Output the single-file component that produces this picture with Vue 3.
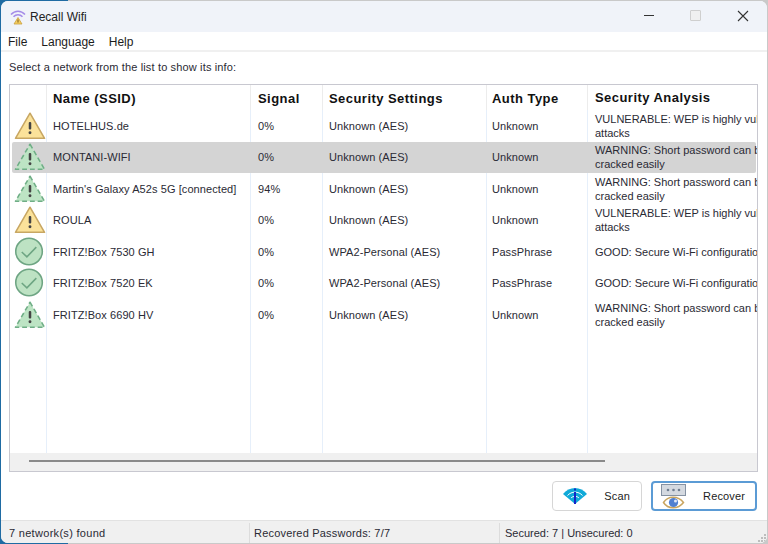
<script setup>
const columns = [
  { key: 'name', label: 'Name (SSID)' },
  { key: 'signal', label: 'Signal' },
  { key: 'security', label: 'Security Settings' },
  { key: 'auth', label: 'Auth Type' },
  { key: 'analysis', label: 'Security Analysis' },
]

const vulnerable = ['VULNERABLE: WEP is highly vulnerable to', 'attacks']
const weak = ['WARNING: Short password can be', 'cracked easily']
const good = ['GOOD: Secure Wi-Fi configuration']

const networks = [
  { icon: 'warn', name: 'HOTELHUS.de', signal: '0%', security: 'Unknown (AES)', auth: 'Unknown', analysis: vulnerable },
  { icon: 'weak', name: 'MONTANI-WIFI', signal: '0%', security: 'Unknown (AES)', auth: 'Unknown', analysis: weak, selected: true },
  { icon: 'weak', name: "Martin's Galaxy A52s 5G [connected]", signal: '94%', security: 'Unknown (AES)', auth: 'Unknown', analysis: weak },
  { icon: 'warn', name: 'ROULA', signal: '0%', security: 'Unknown (AES)', auth: 'Unknown', analysis: vulnerable },
  { icon: 'good', name: 'FRITZ!Box 7530 GH', signal: '0%', security: 'WPA2-Personal (AES)', auth: 'PassPhrase', analysis: good },
  { icon: 'good', name: 'FRITZ!Box 7520 EK', signal: '0%', security: 'WPA2-Personal (AES)', auth: 'PassPhrase', analysis: good },
  { icon: 'weak', name: 'FRITZ!Box 6690 HV', signal: '0%', security: 'Unknown (AES)', auth: 'Unknown', analysis: weak },
]
</script>

<template>
  <div class="desktop">
    <div class="window">
      <header class="titlebar">
        <svg class="app-icon" width="18" height="18" viewBox="0 0 18 18">
          <path d="M2 6.5C6 2 12 2 16 6.5" fill="none" stroke="#a48be8" stroke-width="1.5" />
          <path d="M4.5 8.8C7 6 11 6 13.5 8.8" fill="none" stroke="#a48be8" stroke-width="1.5" />
          <path d="M9 9.5L13 16H5z" fill="#f5cd5e" stroke="#c9a040" stroke-width="0.8" />
          <rect x="8.5" y="11.5" width="1" height="3" fill="#7a5a20" />
        </svg>
        <span class="title">Recall Wifi</span>
        <div class="controls">
          <span class="ctl"><i class="min" /></span>
          <span class="ctl"><i class="max" /></span>
          <span class="ctl">
            <svg width="12" height="12" viewBox="0 0 12 12">
              <path d="M1 1L11 11M11 1L1 11" stroke="#333" stroke-width="1.1" />
            </svg>
          </span>
        </div>
      </header>

      <nav class="menubar">
        <span>File</span>
        <span>Language</span>
        <span>Help</span>
      </nav>

      <main class="content">
        <p class="hint">Select a network from the list to show its info:</p>

        <div class="list">
          <div class="head row">
            <div class="cell icon-cell" />
            <div v-for="col in columns" :key="col.key" class="cell" :class="col.key">{{ col.label }}</div>
          </div>

          <div class="rows">
            <div v-for="net in networks" :key="net.name" class="row" :class="{ selected: net.selected }">
              <div class="cell icon-cell">
                <svg v-if="net.icon === 'warn'" width="33" height="30" viewBox="0 0 33 30">
                  <path d="M16.5 1.8L31.5 27.7H1.5z" fill="#fbe29a" stroke="#c8a763" stroke-width="1.6" stroke-linejoin="round" />
                  <rect x="15.2" y="11" width="2.6" height="7.5" rx="1" fill="#444" />
                  <circle cx="16.5" cy="22" r="1.5" fill="#444" />
                </svg>
                <svg v-else-if="net.icon === 'weak'" width="33" height="30" viewBox="0 0 33 30">
                  <path d="M16.5 1.8L31.5 27.7H1.5z" fill="#bde4c4" stroke="#6fae86" stroke-width="1.6" stroke-dasharray="5 3" stroke-linejoin="round" />
                  <rect x="15.2" y="11" width="2.6" height="7.5" rx="1" fill="#444" />
                  <circle cx="16.5" cy="22" r="1.5" fill="#444" />
                </svg>
                <svg v-else width="33" height="30" viewBox="0 0 33 30">
                  <circle cx="15.5" cy="14.5" r="13.7" fill="#bde2c3" stroke="#6ea583" stroke-width="1.6" />
                  <path d="M8 15L13.3 20L23 10" fill="none" stroke="#6ea583" stroke-width="1.6" />
                </svg>
              </div>
              <div class="cell name">{{ net.name }}</div>
              <div class="cell signal">{{ net.signal }}</div>
              <div class="cell security">{{ net.security }}</div>
              <div class="cell auth">{{ net.auth }}</div>
              <div class="cell analysis">
                <span v-for="line in net.analysis" :key="line">{{ line }}</span>
              </div>
            </div>
            <div class="row filler">
              <div class="cell icon-cell" />
              <div class="cell name" />
              <div class="cell signal" />
              <div class="cell security" />
              <div class="cell auth" />
              <div class="cell analysis" />
            </div>
          </div>

          <div class="scrollbar"><div class="thumb" /></div>
        </div>

        <div class="actions">
          <button class="btn scan">
            <svg width="26" height="18" viewBox="0 0 26 18">
              <path d="M1 7C7 -1 19 -1 25 7L13 17z" fill="#10a9d8" />
              <path d="M5.5 8.5C9.5 4 16.5 4 20.5 8.5" fill="none" stroke="#fff" stroke-width="1" />
              <path d="M9 11C11 8.8 15 8.8 17 11" fill="none" stroke="#fff" stroke-width="1" />
              <rect x="12" y="5" width="2" height="12" fill="#1626c8" />
              <rect x="12" y="1.5" width="2" height="2" fill="#1626c8" />
            </svg>
            <span>Scan</span>
          </button>
          <button class="btn recover">
            <svg width="26" height="28" viewBox="0 0 26 28">
              <rect x="0.5" y="2.5" width="24" height="11" fill="#d4d9e0" stroke="#8592a3" />
              <circle cx="7" cy="8" r="1.3" fill="#6f7d90" />
              <circle cx="12.5" cy="8" r="1.3" fill="#6f7d90" />
              <circle cx="18" cy="8" r="1.3" fill="#6f7d90" />
              <path d="M2.5 20.5C7 13.5 17 13.5 22.5 20.5C17 27.5 7 27.5 2.5 20.5z" fill="#fff" stroke="#c9a560" stroke-width="1.5" />
              <circle cx="12.5" cy="20.5" r="4.6" fill="#4f7fd0" />
              <circle cx="14.5" cy="19" r="1.5" fill="#dfe8f8" />
            </svg>
            <span>Recover</span>
          </button>
        </div>
      </main>

      <footer class="statusbar">
        <div class="panel first">7 network(s) found</div>
        <div class="panel second">Recovered Passwords: 7/7</div>
        <div class="panel third">Secured: 7 | Unsecured: 0</div>
        <svg class="grip" width="10" height="10" viewBox="0 0 10 10">
          <g fill="#bdbdbd">
            <rect x="7" y="1" width="2" height="2" />
            <rect x="4" y="4" width="2" height="2" />
            <rect x="7" y="4" width="2" height="2" />
            <rect x="1" y="7" width="2" height="2" />
            <rect x="4" y="7" width="2" height="2" />
            <rect x="7" y="7" width="2" height="2" />
          </g>
        </svg>
      </footer>
    </div>
  </div>
</template>

<style>
body {
  margin: 0;
  overflow: hidden;
}
</style>

<style scoped>
.desktop {
  width: 768px;
  height: 544px;
  box-sizing: border-box;
  padding: 1px;
  background: linear-gradient(to right, #1f6ba3 68px, #c9c9c9 68px);
  font-family: "Liberation Sans", Arial, sans-serif;
  font-size: 11px;
  letter-spacing: 0.08px;
  color: #2a2a34;
}

.window {
  height: 100%;
  display: flex;
  flex-direction: column;
  background: #fff;
  border-radius: 7px;
  overflow: hidden;
}

/* Title bar */
.titlebar {
  height: 31px;
  flex: none;
  display: flex;
  align-items: center;
  background: #f0f3f9;
  padding-left: 8px;
}

.app-icon {
  flex: none;
}

.title {
  margin-left: 3px;
  font-size: 12px;
  letter-spacing: 0;
  color: #222;
}

.controls {
  margin-left: auto;
  display: flex;
  padding-right: 1px;
  padding-bottom: 2px;
}

.ctl {
  width: 47px;
  height: 29px;
  display: flex;
  align-items: center;
  justify-content: center;
}

.min {
  width: 10px;
  height: 1px;
  background: #333;
}

.max {
  width: 9px;
  height: 9px;
  border: 1px solid #cfcfcf;
  border-radius: 1px;
  background: #f0f0f0;
}

/* Menu */
.menubar {
  height: 20px;
  flex: none;
  display: flex;
  align-items: center;
  gap: 14px;
  padding: 2px 0 0 7px;
  box-sizing: border-box;
  font-size: 12px;
  letter-spacing: 0;
  color: #1c1c1c;
  border-bottom: 2px solid #f0f0f0;
}

/* Content */
.content {
  flex: 1;
  min-height: 0;
  display: flex;
  flex-direction: column;
  padding: 0 9px 0 8px;
}

.hint {
  margin: 9px 0 10px;
  height: 13px;
  line-height: 13px;
  letter-spacing: 0.15px;
}

.list {
  height: 388px;
  flex: none;
  box-sizing: border-box;
  border: 1px solid #c8c8d0;
  display: flex;
  flex-direction: column;
  overflow: hidden;
}

.rows {
  flex: 1;
  min-height: 0;
  display: flex;
  flex-direction: column;
}

.row {
  height: 31.5px;
  flex: none;
  display: flex;
}

.row.selected {
  margin: 0 1px 0 2px;
  background: #d4d4d4;
  border-radius: 2px;
}

.row.selected .cell {
  border-right-color: transparent;
}

.row.selected .icon-cell {
  width: 35px;
  padding-left: 2px;
}

.row.filler {
  flex: 1;
}

.head {
  height: 25px;
  font-size: 13px;
  letter-spacing: 0.45px;
  font-weight: 700;
  color: #111;
}

.head .cell {
  border-right-color: #ececec;
  padding-top: 1px;
}

.cell {
  box-sizing: border-box;
  height: 100%;
  display: flex;
  align-items: center;
  border-right: 1px solid #e6effa;
  overflow: hidden;
  white-space: nowrap;
  flex: none;
}

.icon-cell {
  width: 37px;
  padding-left: 4px;
}

.name {
  width: 204px;
  padding-left: 6px;
}

.signal {
  width: 72px;
  padding-left: 7px;
}

.security {
  width: 164px;
  padding-left: 6px;
}

.auth {
  width: 101px;
  padding-left: 5px;
}

.analysis {
  width: 170px;
  padding-left: 7px;
  border-right: none;
  flex-direction: column;
  align-items: flex-start;
  justify-content: center;
  line-height: 14px;
  letter-spacing: 0;
}

.head .analysis {
  letter-spacing: 0.45px;
}

.scrollbar {
  height: 18px;
  flex: none;
  background: #f0f0f0;
  padding: 7px 0 0 19px;
  box-sizing: border-box;
}

.thumb {
  width: 576px;
  height: 2px;
  background: #8a8a8a;
}

/* Buttons */
.actions {
  flex: 1;
  display: flex;
  align-items: center;
  justify-content: flex-end;
  gap: 9px;
  padding-right: 1px;
}

.btn {
  height: 30px;
  box-sizing: border-box;
  display: flex;
  align-items: center;
  justify-content: space-between;
  background: #fff;
  border: 1px solid #d6d6d6;
  border-radius: 4px;
  font-family: inherit;
  font-size: 11px;
  letter-spacing: 0.14px;
  color: #1c1c1c;
  padding: 0 11px 0 9px;
}

.scan {
  width: 90px;
}

.recover {
  width: 106px;
  border: 2px solid #5b9bd5;
  padding: 0 10px 0 8px;
}

/* Status bar */
.statusbar {
  position: relative;
  height: 23px;
  flex: none;
  display: flex;
  align-items: center;
  background: #f0f0f0;
  border-top: 1px solid #e2e2e2;
  box-sizing: border-box;
  padding-top: 1px;
}

.panel {
  height: 20px;
  display: flex;
  align-items: center;
  box-sizing: border-box;
}

.first {
  width: 248px;
  padding-left: 8px;
  letter-spacing: 0.3px;
}

.second {
  width: 250px;
  padding-left: 4px;
  letter-spacing: 0.2px;
  border-left: 1px solid #dcdcdc;
}

.third {
  padding-left: 5px;
  letter-spacing: 0;
  border-left: 1px solid #dcdcdc;
}

.grip {
  position: absolute;
  right: 0;
  bottom: 0;
}
</style>
